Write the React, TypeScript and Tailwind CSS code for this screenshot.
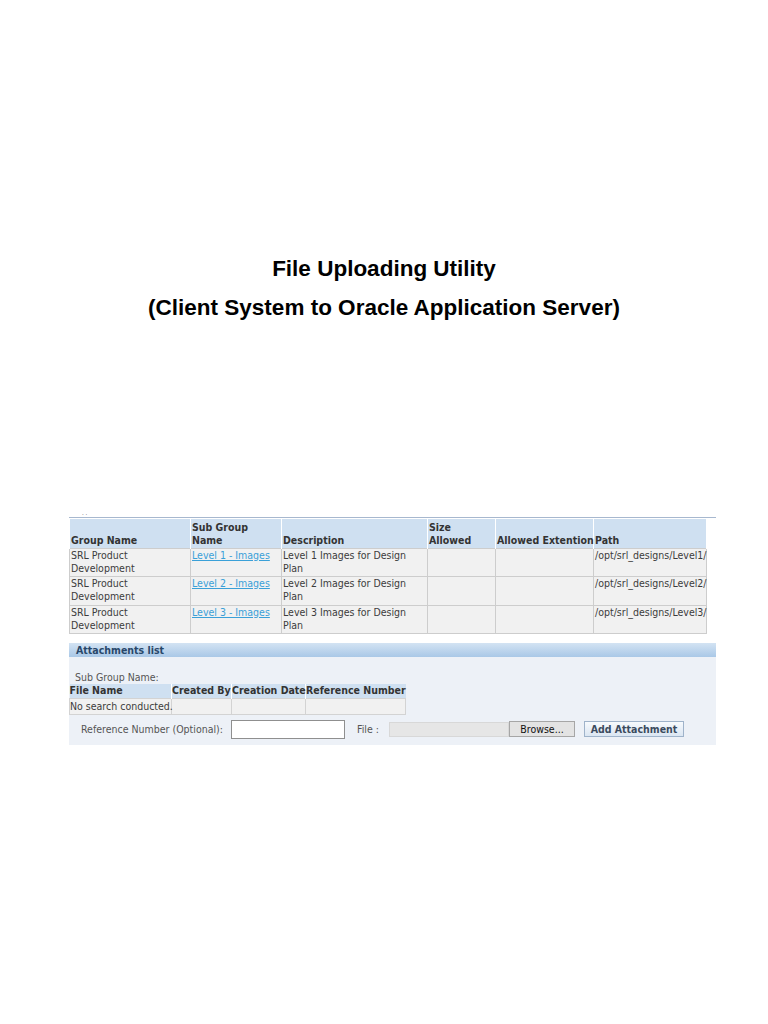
import React from 'react';

const ui = { fontFamily: '"DejaVu Sans Condensed", "DejaVu Sans", sans-serif' };

const rows = [
  { sub: 'Level 1 - Images', desc: 'Level 1 Images for Design Plan', path: '/opt/srl_designs/Level1/' },
  { sub: 'Level 2 - Images', desc: 'Level 2 Images for Design Plan', path: '/opt/srl_designs/Level2/' },
  { sub: 'Level 3 - Images', desc: 'Level 3 Images for Design Plan', path: '/opt/srl_designs/Level3/' },
];

const th = 'bg-[#cfe0f1] border-x border-white px-[1px] pb-[1px] align-bottom text-left font-bold text-[#333]';
const td = 'bg-[#f1f1f1] border border-[#cdcdcd] px-[1px] align-top text-[#3c3c3c]';

export default function App() {
  return (
    <div className="min-h-[1024px] bg-white">
      <div
        className="pt-[249px] text-center text-[22.5px] font-bold leading-[39px] text-black"
        style={{ fontFamily: '"Liberation Sans", Arial, sans-serif' }}
      >
        <div>File Uploading Utility</div>
        <div>(Client System to Oracle Application Server)</div>
      </div>

      <div className="ml-[69px] mt-[183px] w-[647px] text-[10.5px] leading-[13px]" style={ui}>
        <div className="h-[7px] overflow-hidden pl-[13px] text-[6px] leading-[6px] text-[#555]">. .</div>
        <div className="border-t border-[#a7b8cf] pt-[1px]">
          <table className="w-[637px] table-fixed border-collapse">
            <colgroup>
              <col className="w-[121px]" />
              <col className="w-[91px]" />
              <col className="w-[146px]" />
              <col className="w-[68px]" />
              <col className="w-[98px]" />
              <col className="w-[113px]" />
            </colgroup>
            <thead>
              <tr className="h-[29px]">
                <th className={th}>Group Name</th>
                <th className={th}>Sub Group<br />Name</th>
                <th className={th}>Description</th>
                <th className={th}>Size<br />Allowed</th>
                <th className={th + ' whitespace-nowrap'}>Allowed Extention</th>
                <th className={th}>Path</th>
              </tr>
            </thead>
            <tbody>
              {rows.map((r) => (
                <tr key={r.sub} className="h-[28.5px]">
                  <td className={td}>SRL Product<br />Development</td>
                  <td className={td}>
                    <span className="text-[#3aa0d8] underline">{r.sub}</span>
                  </td>
                  <td className={td}>{r.desc}</td>
                  <td className={td}></td>
                  <td className={td}></td>
                  <td className={td + ' whitespace-nowrap'}>{r.path}</td>
                </tr>
              ))}
            </tbody>
          </table>
        </div>

        <div className="mt-[9px] flex h-[14px] items-center bg-gradient-to-b from-[#d3e3f3] to-[#a9c8e7] pl-[7px] font-bold text-[#28476a]">
          Attachments list
        </div>
        <div className="h-[88px] bg-[#edf1f7]">
          <div className="pl-[6px] pt-[14px] leading-[13px] text-[#555]">Sub Group Name:</div>
          <table className="w-[336px] table-fixed border-collapse">
            <colgroup>
              <col className="w-[102px]" />
              <col className="w-[60px]" />
              <col className="w-[74px]" />
              <col className="w-[100px]" />
            </colgroup>
            <thead>
              <tr className="h-[14px]">
                <th className="bg-[#cfe0f1] border-r border-white text-left font-bold text-[#333]">File Name</th>
                <th className="bg-[#cfe0f1] border-r border-white text-left font-bold text-[#333] whitespace-nowrap">Created By</th>
                <th className="bg-[#cfe0f1] border-r border-white text-left font-bold text-[#333] whitespace-nowrap">Creation Date</th>
                <th className="bg-[#cfe0f1] text-left font-bold text-[#333] whitespace-nowrap">Reference Number</th>
              </tr>
            </thead>
            <tbody>
              <tr className="h-[16px]">
                <td className="bg-[#f1f1f1] border border-[#d3d3d3] whitespace-nowrap text-[#3c3c3c]">No search conducted.</td>
                <td className="bg-[#f1f1f1] border border-[#d3d3d3]"></td>
                <td className="bg-[#f1f1f1] border border-[#d3d3d3]"></td>
                <td className="bg-[#f1f1f1] border border-[#d3d3d3]"></td>
              </tr>
            </tbody>
          </table>
          <div className="mt-[5px] flex items-center text-[#555]">
            <span className="ml-[12px] w-[150px]">Reference Number (Optional):</span>
            <div className="h-[19px] w-[114px] border border-[#8f8f8f] bg-white" />
            <span className="ml-[12px] w-[32px]">File :</span>
            <div className="h-[15px] w-[120px] border border-[#d8d8d8] bg-[#e6e6e6]" />
            <div className="flex h-[16px] w-[66px] items-center justify-center border border-[#a6a6a6] bg-[#e3e3e3] text-[#111]">
              Browse...
            </div>
            <div className="ml-[9px] flex h-[16px] w-[100px] items-center justify-center border border-[#9fb3ca] bg-gradient-to-b from-[#f7fafd] to-[#dbe6f2] font-bold text-[#3b4b5e]">
              Add Attachment
            </div>
          </div>
        </div>
      </div>
    </div>
  );
}
